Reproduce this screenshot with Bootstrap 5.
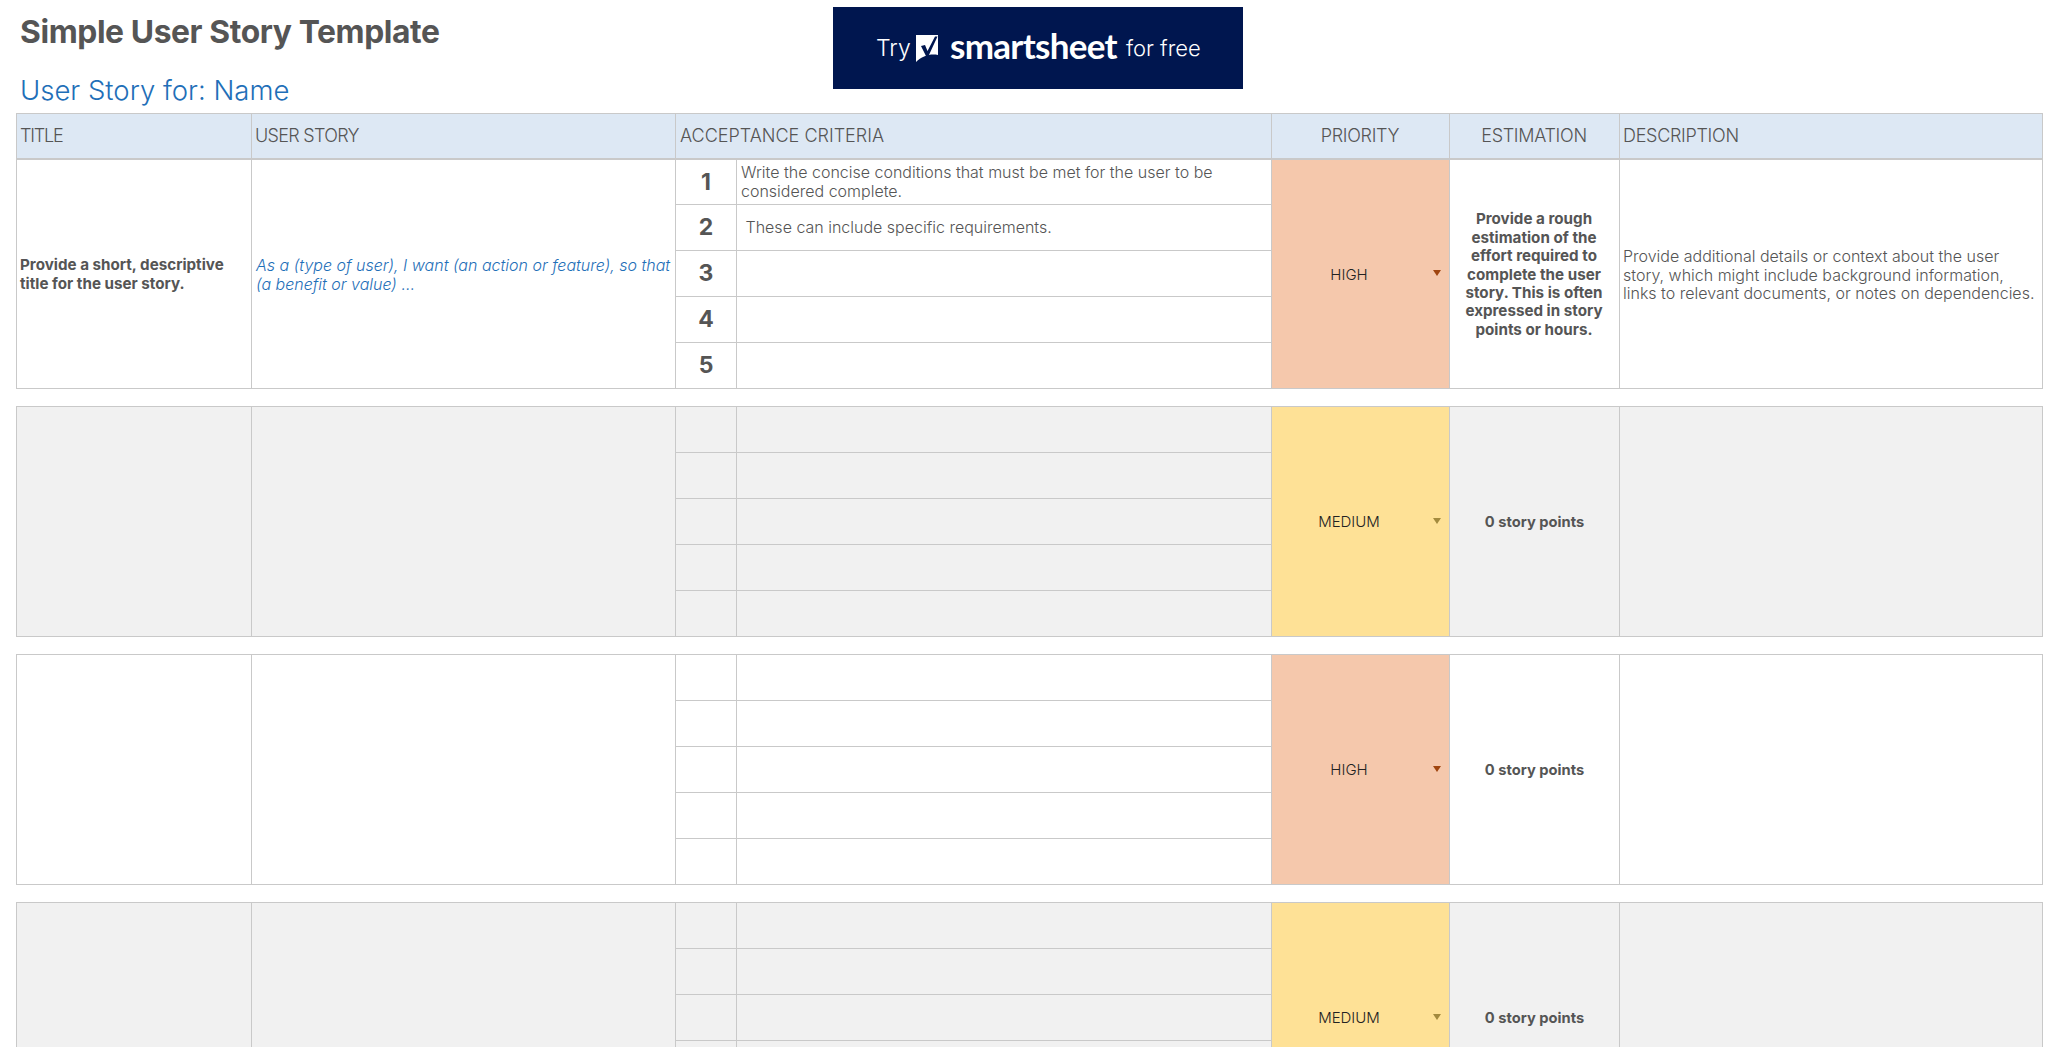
<!DOCTYPE html>
<html>
<head>
    <title>Simple User Story Template</title>
    <link href="https://cdn.jsdelivr.net/npm/bootstrap@5.3.0/dist/css/bootstrap.min.css" rel="stylesheet">
    <style>
        html, body { overflow: hidden; }
        body { font-family: Inter, "Liberation Sans", sans-serif; color: #555; background: #fff; }
        .sheet { padding: 0 6px 0 16px; }
        .top-area { height: 113px; }
        .top-left { width: 817px; padding-left: 4px; }
        .sheet-title { font-size: 31.8px; font-weight: 700; line-height: 36px; margin: 14px 0 0; color: #555; letter-spacing: -0.4px; }
        .sheet-sub { font-size: 27.5px; font-weight: 300; line-height: 32px; margin: 24px 0 0; color: #1f6fb8; }
        .promo { width: 410px; height: 82px; margin-top: 7px; padding-left: 43px; background: #00164f; color: #fff; }
        .promo-try { font-size: 23px; font-weight: 300; width: 40px; }
        .promo-brand { font-family: Lato, sans-serif; font-size: 35px; font-weight: 700; line-height: 1; margin: 0 9px 5px 12px; letter-spacing: -0.7px; }
        .promo-free { font-size: 22px; font-weight: 300; }
        .story-table { table-layout: fixed; width: 2026px; margin-bottom: 17px; border-color: #c9c9c9; color: #555; --bs-table-color: #555; }
        .story-table > :not(caption) > * > * { padding: 0 4px; vertical-align: middle; height: 46px; font-size: 16px; line-height: 18.4px; color: #555; }
        .story-table > thead > tr > th { height: 45px; padding-left: 3px; font-size: 18px; font-weight: 300; letter-spacing: -0.3px; --bs-table-bg: #dde8f4; border-bottom-width: 2px; }
        .story-table > thead > tr > .head-tight { letter-spacing: -1.2px; }
        .story-table > thead > tr > .head-snug { letter-spacing: -0.7px; }
        .story-table > thead > tr > .head-wide { letter-spacing: 0; padding-left: 4px; }
        .story-table > tbody > tr > td[rowspan] { padding-top: 2px; }
        .row-grey > * { --bs-table-bg: #f1f1f1; }
        .story-table > tbody > tr > .prio-high { --bs-table-bg: #f5c8ac; color: #222; padding: 2px 0 0; font-size: 15px; }
        .story-table > tbody > tr > .prio-med { --bs-table-bg: #fee196; color: #222; padding: 2px 0 0; font-size: 15px; }
        .prio-text { width: 154px; text-align: center; font-weight: 300; }
        .prio-caret { width: 0; height: 0; border-left: 4px solid transparent; border-right: 4px solid transparent; border-top: 6px solid #a0450f; margin: -4px 8px 0 auto; }
        .prio-med .prio-caret { border-top-color: #a38a3e; }
        .story-table > tbody > tr > .num-cell { font-size: 23px; font-weight: 700; text-align: center; }
        .crit-text { font-weight: 300; }
        .story-table > tbody > tr > .bold-text { font-size: 15.2px; font-weight: 700; padding-left: 3px; }
        .story-table > tbody > tr > .points-text { font-size: 14.7px; font-weight: 700; text-align: center; }
        .story-text { font-style: italic; font-weight: 300; color: #1f6fb8 !important; }
        .story-table > tbody > tr > .desc-text { font-weight: 300; padding-left: 3px; }
    </style>
</head>
<body>
<div class="sheet">
    <div class="top-area d-flex align-items-start">
        <div class="top-left">
            <h1 class="sheet-title">Simple User Story Template</h1>
            <h2 class="sheet-sub">User Story for: Name</h2>
        </div>
        <a class="promo d-flex align-items-center text-decoration-none" href="#">
            <span class="promo-try">Try</span>
            <svg width="22" height="28" viewBox="0 0 22 28">
                <path d="M0 1H22V21C14 19.5 6 22 0 28Z" fill="#fff"/>
                <path d="M5 12L9 11L11.5 17L19 2.5H21.5L12.5 22H10Z" fill="#00164f"/>
            </svg>
            <span class="promo-brand">smartsheet</span>
            <span class="promo-free">for free</span>
        </a>
    </div>

    <table class="table table-bordered story-table">
        <colgroup><col style="width:235px"><col style="width:424px"><col style="width:61px"><col style="width:535px"><col style="width:178px"><col style="width:170px"><col style="width:423px"></colgroup>
        <thead>
            <tr>
                <th class="head-tight">TITLE</th>
                <th class="head-snug">USER STORY</th>
                <th colspan="2" class="head-wide">ACCEPTANCE CRITERIA</th>
                <th class="text-center">PRIORITY</th>
                <th class="text-center">ESTIMATION</th>
                <th>DESCRIPTION</th>
            </tr>
        </thead>
        <tbody>
            <tr>
                <td rowspan="5" class="bold-text">Provide a short, descriptive title for the user story.</td>
                <td rowspan="5" class="story-text">As a (type of user), I want (an action or feature), so that (a benefit or value) …</td>
                <td class="num-cell">1</td>
                <td class="crit-text">Write the concise conditions that must be met for the user to be considered complete.</td>
                <td rowspan="5" class="prio-high"><div class="d-flex align-items-center"><span class="prio-text">HIGH</span><span class="prio-caret"></span></div></td>
                <td rowspan="5" class="bold-text text-center">Provide a rough estimation of the effort required to complete the user story. This is often expressed in story points or hours.</td>
                <td rowspan="5" class="desc-text">Provide additional details or context about the user story, which might include background information, links to relevant documents, or notes on dependencies.</td>
            </tr>
            <tr><td class="num-cell">2</td><td class="crit-text">&nbsp;These can include specific requirements.</td></tr>
            <tr><td class="num-cell">3</td><td></td></tr>
            <tr><td class="num-cell">4</td><td></td></tr>
            <tr><td class="num-cell">5</td><td></td></tr>
        </tbody>
    </table>

    <table class="table table-bordered story-table">
        <colgroup><col style="width:235px"><col style="width:424px"><col style="width:61px"><col style="width:535px"><col style="width:178px"><col style="width:170px"><col style="width:423px"></colgroup>
        <tbody>
            <tr class="row-grey">
                <td rowspan="5"></td><td rowspan="5"></td><td></td><td></td>
                <td rowspan="5" class="prio-med"><div class="d-flex align-items-center"><span class="prio-text">MEDIUM</span><span class="prio-caret"></span></div></td>
                <td rowspan="5" class="points-text">0 story points</td>
                <td rowspan="5"></td>
            </tr>
            <tr class="row-grey"><td></td><td></td></tr>
            <tr class="row-grey"><td></td><td></td></tr>
            <tr class="row-grey"><td></td><td></td></tr>
            <tr class="row-grey"><td></td><td></td></tr>
        </tbody>
    </table>

    <table class="table table-bordered story-table">
        <colgroup><col style="width:235px"><col style="width:424px"><col style="width:61px"><col style="width:535px"><col style="width:178px"><col style="width:170px"><col style="width:423px"></colgroup>
        <tbody>
            <tr>
                <td rowspan="5"></td><td rowspan="5"></td><td></td><td></td>
                <td rowspan="5" class="prio-high"><div class="d-flex align-items-center"><span class="prio-text">HIGH</span><span class="prio-caret"></span></div></td>
                <td rowspan="5" class="points-text">0 story points</td>
                <td rowspan="5"></td>
            </tr>
            <tr><td></td><td></td></tr>
            <tr><td></td><td></td></tr>
            <tr><td></td><td></td></tr>
            <tr><td></td><td></td></tr>
        </tbody>
    </table>

    <table class="table table-bordered story-table">
        <colgroup><col style="width:235px"><col style="width:424px"><col style="width:61px"><col style="width:535px"><col style="width:178px"><col style="width:170px"><col style="width:423px"></colgroup>
        <tbody>
            <tr class="row-grey">
                <td rowspan="5"></td><td rowspan="5"></td><td></td><td></td>
                <td rowspan="5" class="prio-med"><div class="d-flex align-items-center"><span class="prio-text">MEDIUM</span><span class="prio-caret"></span></div></td>
                <td rowspan="5" class="points-text">0 story points</td>
                <td rowspan="5"></td>
            </tr>
            <tr class="row-grey"><td></td><td></td></tr>
            <tr class="row-grey"><td></td><td></td></tr>
            <tr class="row-grey"><td></td><td></td></tr>
            <tr class="row-grey"><td></td><td></td></tr>
        </tbody>
    </table>
</div>
<script src="https://cdn.jsdelivr.net/npm/bootstrap@5.3.0/dist/js/bootstrap.bundle.min.js"></script>
</body>
</html>
